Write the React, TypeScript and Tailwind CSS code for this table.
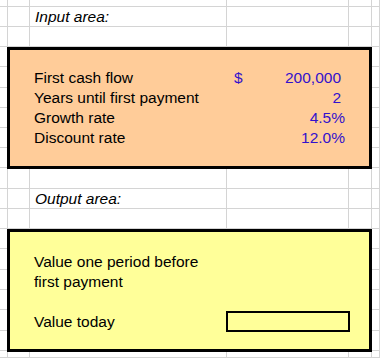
import React from "react";

// column widths and row heights of the visible sheet region
const colWidths = [8, 22, 197, 122, 23, 8];
const rowHeights = [7, 20, 20, 20, 21, 20, 20, 20, 20, 21, 20, 20, 20, 21, 20, 20, 21, 20, 7];

const inputs = [
  { label: "First cash flow", dollar: true, value: "200,000", pct: false },
  { label: "Years until first payment", dollar: false, value: "2", pct: false },
  { label: "Growth rate", dollar: false, value: "4.5%", pct: true },
  { label: "Discount rate", dollar: false, value: "12.0%", pct: true },
];

export default function App() {
  const cells: React.ReactNode[] = [];
  rowHeights.forEach((_, r) => {
    colWidths.forEach((_, c) => {
      cells.push(
        <div
          key={`${r}-${c}`}
          className="border-r border-b border-[#d4d4d4]"
          style={{ gridRow: r + 1, gridColumn: c + 1 }}
        />
      );
    });
  });

  return (
    <div className="w-[380px] h-[358px] overflow-hidden bg-white font-['Liberation_Sans',Arial,sans-serif] text-[15.5px] text-black">
      <div className="grid grid-cols-[8px_22px_197px_122px_23px_8px] grid-rows-[7px_20px_20px_20px_21px_20px_20px_20px_20px_21px_20px_20px_20px_21px_20px_20px_21px_20px_7px]">
        {cells}

        {/* Input area label */}
        <div className="row-start-2 col-start-3 col-span-2 pl-[5px] italic leading-[20px]">
          Input area:
        </div>

        {/* Input box */}
        <div className="row-start-4 row-end-10 col-start-2 col-end-6 -ml-px -mb-px border-[3px] border-black bg-[#ffcc99] pt-[17px]">
          {inputs.map((row, i) => (
            <div
              key={row.label}
              className={`grid grid-cols-[217px_122px_20px] ${i === 0 ? "h-[21px] leading-[21px]" : "h-[20px] leading-[20px]"}`}
            >
              <div className="pl-[24px] whitespace-nowrap">{row.label}</div>
              <div className={`flex justify-between pl-[7px] text-[#3311cc] ${row.pct ? "pr-[4px]" : "pr-[8px]"}`}>
                <span>{row.dollar ? "$" : ""}</span>
                <span>{row.value}</span>
              </div>
              <div />
            </div>
          ))}
        </div>

        {/* Output area label */}
        <div className="row-start-11 col-start-3 col-span-2 pl-[5px] italic leading-[20px]">
          Output area:
        </div>

        {/* Output box */}
        <div className="row-start-13 row-end-19 col-start-2 col-end-6 -ml-px -mb-px border-[3px] border-black bg-[#ffff99] pt-[20px]">
          <div className="pl-[24px] leading-[20px]">
            Value one period before
            <br />
            first payment
          </div>
          <div className="mt-[19px] grid grid-cols-[216px_124px]">
            <div className="pl-[24px] leading-[21px]">Value today</div>
            <div className="h-[21px] border-2 border-black" />
          </div>
        </div>
      </div>
    </div>
  );
}
